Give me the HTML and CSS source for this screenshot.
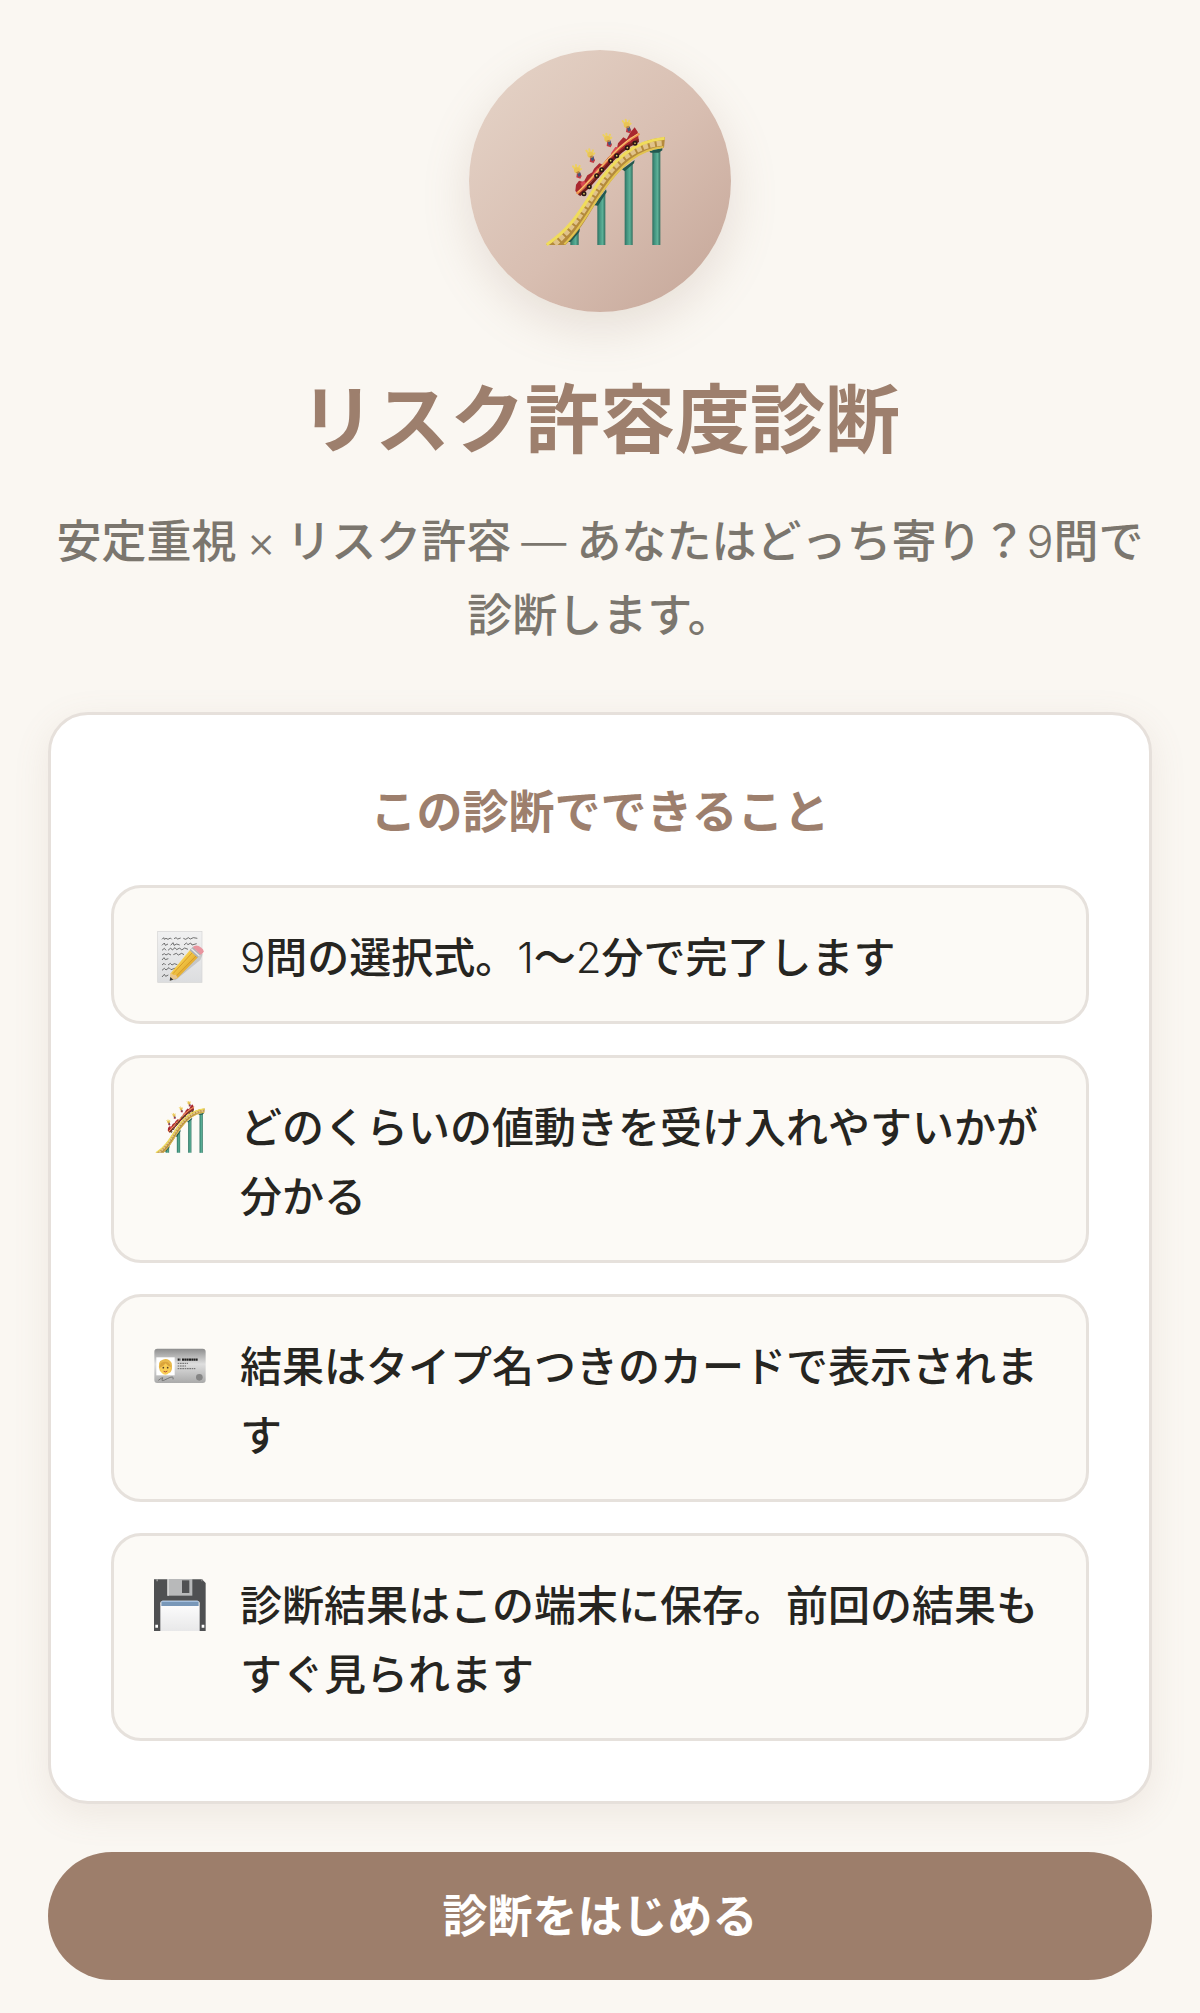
FILE: index.html
```html
<!DOCTYPE html>
<html lang="ja">
<head>
<meta charset="utf-8">
<meta name="viewport" content="width=device-width, initial-scale=1">
<title>リスク許容度診断</title>
<link rel="stylesheet" href="styles.css">
</head>
<body>
<svg class="sprite" aria-hidden="true">
  <defs>
    <linearGradient id="post" x1="0" x2="1" y1="0" y2="0">
      <stop offset="0" stop-color="#2f6f60"/><stop offset=".3" stop-color="#439580"/><stop offset=".65" stop-color="#5cb097"/><stop offset="1" stop-color="#2f6d5d"/>
    </linearGradient>
    <g id="rider">
      <path d="M-2 26L0 12L8 10L14 22L10 30Z" fill="#c23843"/>
      <path d="M0 12L9 9L12 20L5 25Z" fill="#43557a"/>
      <path d="M-12-7L-4 3M-3-11L-1 2M8-8L3 3M12 1L4 6" stroke="#edd05f" stroke-width="6" stroke-linecap="round"/>
      <circle cx="0" cy="5" r="9" fill="#e9c455"/>
      <path d="M-3 11L6 7L8 13L1 15Z" fill="#b98345"/>
    </g>
    <g id="coaster">
      <path d="M121 372L146 357V405H121Z" fill="url(#post)"/>
      <path d="M202 270L226 244V405H202Z" fill="url(#post)"/>
      <path d="M284 180L308 158V405H284Z" fill="url(#post)"/>
      <path d="M367 118H391V405H367Z" fill="url(#post)"/>
      <path d="M108 396L150 355L148 366L122 396ZM193 286L228 238L230 246L204 287ZM276 178L314 150L312 160L284 184ZM358 124L397 114V121L386 128H362Z" fill="#23584f"/>
      <path d="M48 405C122 355 149 302 192 235C248 148 306 91 405 82L402 113C326 119 278 164 224 239C184 296 158 356 106 405Z" fill="#b48a3c"/>
      <path d="M74 402C136 348 164 294 207 229C258 154 315 105 400 99" fill="none" stroke="#e0c289" stroke-width="16" stroke-dasharray="15 6"/>
      <path d="M50 404C124 354 151 303 194 236C250 150 307 95 404 85" fill="none" stroke="#f0dc5b" stroke-width="9"/>
      <path d="M103 403C154 354 181 295 220 240C274 163 327 119 400 111" fill="none" stroke="#e2c350" stroke-width="6"/>
      <path d="M138 224L147 212L161 216L172 196L187 187L192 176L208 160L219 164L232 145L248 130L258 129L264 100L280 82L290 88L302 66L314 52L323 65L326 88C260 119 218 182 147 254L136 243Z" fill="#a9272f"/>
      <use href="#rider" x="141" y="176"/><use href="#rider" x="181" y="129"/><use href="#rider" x="232" y="82"/><use href="#rider" x="290" y="40"/>
      <path d="M151 219L162 212L170 222L157 234ZM186 194L202 174L212 178L194 199ZM242 131L256 111L268 112L252 133ZM289 94L302 80L310 82L300 95Z" fill="#d84953"/>
      <path d="M144 254C199 210 243 125 326 86L327 96C248 132 215 207 151 258Z" fill="#701c1a"/>
      <path d="M142 249C194 204 242 118 326 73" fill="none" stroke="#ed914a" stroke-width="7" stroke-linecap="round"/>
      <path d="M145 245C197 200 244 117 324 71" fill="none" stroke="#fae29a" stroke-width="2"/>
      <g fill="#e4ca62" stroke="#2b1715" stroke-width="5"><circle cx="162" cy="251" r="5"/><circle cx="178" cy="230" r="5"/><circle cx="200" cy="197" r="5"/><circle cx="215" cy="179" r="5"/><circle cx="242" cy="152" r="5"/><circle cx="260" cy="137" r="5"/><circle cx="292" cy="113" r="5"/><circle cx="315" cy="100" r="5"/></g>
    </g>
    <linearGradient id="paper" x1="0" x2="0" y1="0" y2="1"><stop offset="0" stop-color="#f1f1f1"/><stop offset="1" stop-color="#dcdddf"/></linearGradient>
    <linearGradient id="pencil" x1="0" x2="1" y1="0" y2="1"><stop offset=".3" stop-color="#fbd755"/><stop offset=".7" stop-color="#dda126"/></linearGradient>
    <linearGradient id="silver" x1="0" x2="0" y1="0" y2="1"><stop offset="0" stop-color="#8d8d8d"/><stop offset=".2" stop-color="#b2b2b2"/><stop offset=".45" stop-color="#dedede"/><stop offset="1" stop-color="#aaa"/></linearGradient>
    <linearGradient id="label" x1="0" x2="0" y1="0" y2="1"><stop offset="0" stop-color="#fff"/><stop offset="1" stop-color="#e8e8e9"/></linearGradient>
  </defs>
</svg>
<main class="page">
  <header class="hero">
    <div class="badge">
      <svg class="badge-icon" viewBox="-15 -12 450 450" aria-hidden="true"><use href="#coaster"/></svg>
    </div>
    <h1 class="title">リスク許容度診断</h1>
    <p class="lead">安定重視 <span class="latin">×</span> リスク許容 <span class="latin">—</span> あなたはどっち寄り？<span class="latin">9</span>問で<br>診断します。</p>
  </header>

  <section class="card" aria-labelledby="features">
    <h2 class="card-title" id="features">この診断でできること</h2>
    <ul class="list">
      <li class="item">
        <svg class="icon" viewBox="0 0 156 156" aria-hidden="true">
          <rect x="11" y="1" width="133" height="153" fill="url(#paper)" stroke="#d4d4d4" stroke-width="2"/>
          <g fill="none" stroke="#555" stroke-width="2.5">
            <path d="M24 25l5-5 2 5 5-3 6 3 7-4 4 4M60 23l6-3 5 4 9-3M88 22l7 3 8-5 6 4 9-4 12 2"/>
            <path d="M24 43l7-7 3 7 8-4M50 43l7-8 3 8 8-4 9 3M90 42l7-6 5 5 8-5 4 6 14-4"/>
            <path d="M24 58l7-6 5 6M42 58l8-7 5 6 8-7 5 6 9-5 6 6 9-6 10 4M110 56l9-4 5 4"/>
            <path d="M24 72l7-4 5 4 7-4 8 4M58 71l9-4 6 5 10-5 7 4"/>
            <path d="M24 87l6-7 4 6 9-3M24 102l6-5 5 5M42 102l7-5 5 5 7-4 9 3M24 118l7-6 5 5 9-7 6 6 14-5M24 138l7-8 4 6 8-4"/>
          </g>
          <path d="M52 146L133 75L126 62L146 70L139 87L64 148Z" fill="#777" opacity=".28"/>
          <path d="M50 127L108 57L132 79L70 142L48 148Z" fill="url(#pencil)"/>
          <path d="M57 128L116 64M65 137L126 75" stroke="#d89a29" stroke-width="3"/>
          <path d="M50 125L48 148L71 141L66 131L58 132Z" fill="#e9c68d"/>
          <path d="M49 138L47 149L58 146Z" fill="#333"/>
          <path d="M107 58L116 48L140 70L131 80Z" fill="#afb2b5"/>
          <path d="M112 53L136 75" stroke="#e8e8e8" stroke-width="4"/>
          <path d="M116 48Q127 38 142 50T140 71Z" fill="#e9959f"/>
        </svg>
        <span class="item-text"><span class="latin">9</span>問の選択式。<span class="latin">1</span>〜<span class="latin">2</span>分で完了します</span>
      </li>
      <li class="item">
        <svg class="icon" viewBox="36 28 378 378" aria-hidden="true"><use href="#coaster"/></svg>
        <span class="item-text">どのくらいの値動きを受け入れやすいかが分かる</span>
      </li>
      <li class="item">
        <svg class="icon" viewBox="0 0 156 156" aria-hidden="true">
          <rect x="1" y="26" width="154" height="103" rx="9" fill="url(#silver)"/>
          <rect x="7" y="52" width="55" height="54" fill="#fff"/>
          <path d="M18 94Q8 63 26 59Q43 53 53 69Q57 90 48 98Z" fill="#e9b94b"/>
          <ellipse cx="34" cy="84" rx="16" ry="20" fill="#f9ce55"/>
          <path d="M17 83Q17 67 29 65Q46 63 51 81Q40 78 35 70Q28 80 17 83Z" fill="#dba43b"/>
          <circle cx="28" cy="83" r="2.5" fill="#543b25"/><circle cx="41" cy="83" r="2.5" fill="#543b25"/>
          <path d="M29 94Q35 98 40 93" stroke="#b34e34" stroke-width="3" fill="none"/>
          <path d="M71 59h8M84 59h47" stroke="#222" stroke-width="7" stroke-dasharray="6 1"/>
          <path d="M71 70h31M71 78h25M71 86h53" stroke="#666" stroke-width="3" stroke-dasharray="5 2"/>
          <circle cx="136" cy="112" r="10" fill="#858585"/>
          <path d="M13 121Q31 107 25 117T40 116T57 118" stroke="#555" stroke-width="2" fill="none"/>
        </svg>
        <span class="item-text">結果はタイプ名つきのカードで表示されます</span>
      </li>
      <li class="item">
        <svg class="icon" viewBox="0 0 156 156" aria-hidden="true">
          <path d="M0 1H144L155 12V156H0Z" fill="#4f5052"/>
          <path d="M7 0h5v7H7zM142 0h3v7h-3z" fill="#999"/>
          <rect x="40" y="0" width="75" height="50" fill="#b8b9ba"/>
          <path d="M40 0h5v50h-5z" fill="#d5d5d5"/>
          <rect x="84" y="4" width="22" height="38" fill="#505153"/>
          <path d="M19 156V73q0-8 8-8h102q8 0 8 8v83z" fill="url(#label)"/>
          <path d="M22 67h112v14H22z" fill="#7897b8"/><path d="M24 67h108" stroke="#a5c0df" stroke-width="4"/>
          <path d="M4 137h8v9H4zM143 137h8v9h-8z" fill="#fff"/>
        </svg>
        <span class="item-text">診断結果はこの端末に保存。前回の結果もすぐ見られます</span>
      </li>
    </ul>
  </section>

  <button class="start" type="button">診断をはじめる</button>
</main>
</body>
</html>
```
FILE: styles.css
```css
* {
  box-sizing: border-box;
}

body {
  margin: 0;
  background: #faf7f2;
  color: #262521;
  font-family: "Noto Sans CJK JP", sans-serif;
  font-weight: 500;
}

h1, h2, p, ul {
  margin: 0;
  padding: 0;
}

.sprite {
  display: block;
  width: 0;
  height: 0;
}

.page {
  padding: 50px 48px 32px;
}

.hero {
  display: flex;
  flex-direction: column;
  align-items: center;
  text-align: center;
}

.badge {
  display: flex;
  align-items: center;
  justify-content: center;
  width: 262px;
  height: 262px;
  border-radius: 50%;
  background: linear-gradient(135deg, #e6d5c9 0%, #d8beb1 55%, #c4a597 100%);
  box-shadow: 0 16px 48px rgba(157, 125, 107, 0.2);
}

.badge-icon {
  width: 150px;
  height: 150px;
}

.title {
  margin-top: 58px;
  color: #9d7f6d;
  font-size: 75px;
  font-weight: 700;
  line-height: 90px;
}

.lead {
  margin-top: 42px;
  color: #7b766e;
  font-size: 45px;
  line-height: 74px;
}

.latin {
  font-family: Inter, "Noto Sans CJK JP", sans-serif;
  font-weight: 300;
  line-height: 1;
}

.card {
  margin-top: 62px;
  padding: 58px 60px 60px;
  border: 3px solid #e6e0db;
  border-radius: 40px;
  background: #fff;
  box-shadow: 0 10px 36px rgba(157, 125, 107, 0.12);
}

.card-title {
  margin-bottom: 42px;
  color: #9d7f6d;
  font-size: 46px;
  font-weight: 700;
  line-height: 70px;
  text-align: center;
}

.list {
  display: flex;
  flex-direction: column;
  gap: 31px;
  list-style: none;
}

.item {
  display: flex;
  align-items: flex-start;
  gap: 34px;
  padding: 32px 40px;
  border: 3px solid #e6e1dc;
  border-radius: 30px;
  background: #fcfaf6;
}

.icon {
  flex: none;
  width: 52px;
  height: 52px;
  margin-top: 11px;
}

.item-text {
  font-size: 42px;
  line-height: 69px;
}

.start {
  display: block;
  width: 100%;
  height: 128px;
  margin-top: 48px;
  padding: 0 0 6px;
  border: 0;
  border-radius: 64px;
  background: #9d7e6b;
  color: #fff;
  font-family: inherit;
  font-size: 45px;
  font-weight: 700;
  cursor: pointer;
}
```
